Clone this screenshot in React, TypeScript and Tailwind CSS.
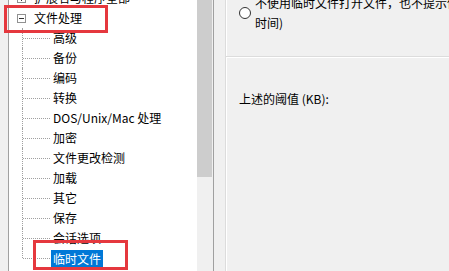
import { Fragment } from "react"

const children = [
	"高级",
	"备份",
	"编码",
	"转换",
	"DOS/Unix/Mac 处理",
	"加密",
	"文件更改检测",
	"加载",
	"其它",
	"保存",
	"会话选项",
	"临时文件",
]

function ExpandBox({ open }: { open: boolean }) {
	return (
		<div className="relative w-[9px] h-[9px] border border-[#919191] bg-white">
			<div className="absolute left-[1px] top-[3px] w-[5px] h-[1px] bg-[#333]" />
			{!open && <div className="absolute left-[3px] top-[1px] w-[1px] h-[5px] bg-[#333]" />}
		</div>
	)
}

export default function App() {
	const font = { fontFamily: '"Noto Sans CJK SC", "Noto Sans", sans-serif' }

	return (
		<div
			className="relative flex w-[449px] h-[271px] overflow-hidden bg-[#f0f0f0] text-[12px] text-black"
			style={font}
		>
			{/* LEFT STRIP */}
			<div className="w-[9px] shrink-0 bg-[#f0f0f0] border-r border-[#a0a0a0]" />

			{/* TREE */}
			<div className="w-[188px] shrink-0 bg-white overflow-hidden">
				<div className="flex flex-col -mt-[12px]">
					{/* partial top item */}
					<div className="flex items-center h-[20px] leading-[20px]">
						<div className="w-[8px]" />
						<ExpandBox open={false} />
						<div className="w-[6px]" />
						<span className="px-[2px] whitespace-nowrap">扩展名与程序全部</span>
					</div>

					{/* 文件处理 */}
					<div className="flex items-center h-[20px] leading-[20px]">
						<div className="w-[8px]" />
						<ExpandBox open={true} />
						<div className="w-[6px]" />
						<span className="px-[2px] whitespace-nowrap">文件处理</span>
					</div>

					{children.map((label, i) => {
						const last = i === children.length - 1
						const selected = label === "临时文件"
						return (
							<Fragment key={label}>
								<div className="flex h-[20px] leading-[20px]">
									<div className="w-[13px] shrink-0" />
									<div className="relative w-[29px] shrink-0">
										<div
											className={
												last
													? "absolute left-0 top-0 h-[10px] border-l border-dotted border-[#a0a0a0]"
													: "absolute left-0 top-0 h-[20px] border-l border-dotted border-[#a0a0a0]"
											}
										/>
										<div className="absolute left-[1px] top-[10px] w-[27px] border-t border-dotted border-[#a0a0a0]" />
									</div>
									<div className="flex items-center">
										<span
											className={
												selected
													? "px-[2px] h-[17px] leading-[17px] whitespace-nowrap bg-[#0078d7] text-white"
													: "px-[2px] whitespace-nowrap"
											}
										>
											{label}
										</span>
									</div>
								</div>
							</Fragment>
						)
					})}
				</div>
			</div>

			{/* SCROLLBAR */}
			<div className="w-[17px] shrink-0 bg-[#f0f0f0] border-r border-[#a0a0a0]">
				<div className="w-[15px] h-[177px] bg-[#cdcdcd]" />
			</div>

			{/* RIGHT PANEL */}
			<div className="flex flex-1 min-w-0 overflow-hidden">
				<div className="w-[11px] shrink-0" />
				<div className="flex-1 min-w-0 flex flex-col border-l border-[#dcdcdc] shadow-[inset_1px_0_0_#ffffff]">
					<div className="h-[57px] border-b border-[#dcdcdc] shadow-[0_1px_0_#ffffff]">
						<div className="flex items-center -mt-[7px] pl-[13px]">
							<div className="w-[12px] h-[12px] rounded-full border border-[#333] bg-white shrink-0" />
							<div className="ml-[4px] leading-[20px]">
								<div className="whitespace-nowrap">不使用临时文件打开文件，也不提示保存文件(仅当文件大小超过下列阈值</div>
								<div className="whitespace-nowrap">时间)</div>
							</div>
						</div>
					</div>
					<div className="pt-[32px] pl-[13px] leading-[20px] whitespace-nowrap">上述的阈值 (KB):</div>
				</div>
			</div>

			{/* RED HIGHLIGHT BOXES */}
			<div className="absolute left-[4px] top-[5px] w-[104px] h-[28px] border-[3px] border-[#e5383e]" />
			<div className="absolute left-[33px] top-[240px] w-[95px] h-[30px] border-[3px] border-[#e5383e]" />
		</div>
	)
}
